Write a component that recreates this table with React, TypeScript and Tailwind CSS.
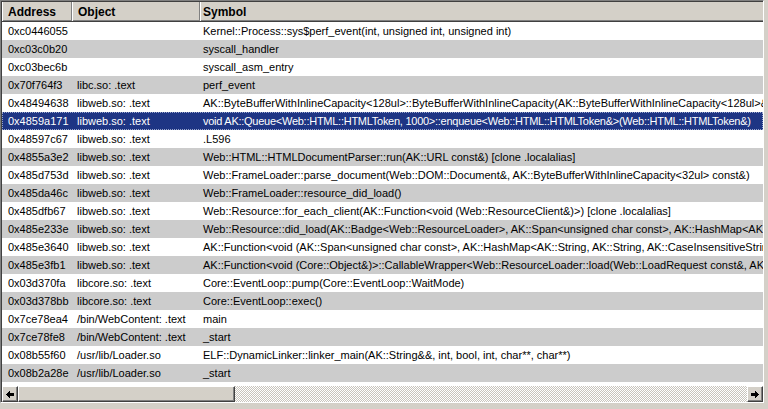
import React from "react";

const rows: [string, string, string][] = [
  ["0xc0446055", "", "Kernel::Process::sys$perf_event(int, unsigned int, unsigned int)"],
  ["0xc03c0b20", "", "syscall_handler"],
  ["0xc03bec6b", "", "syscall_asm_entry"],
  ["0x70f764f3", "libc.so: .text", "perf_event"],
  ["0x48494638", "libweb.so: .text", "AK::ByteBufferWithInlineCapacity<128ul>::ByteBufferWithInlineCapacity(AK::ByteBufferWithInlineCapacity<128ul>&&)"],
  ["0x4859a171", "libweb.so: .text", "void AK::Queue<Web::HTML::HTMLToken, 1000>::enqueue<Web::HTML::HTMLToken&>(Web::HTML::HTMLToken&)"],
  ["0x48597c67", "libweb.so: .text", ".L596"],
  ["0x4855a3e2", "libweb.so: .text", "Web::HTML::HTMLDocumentParser::run(AK::URL const&) [clone .localalias]"],
  ["0x485d753d", "libweb.so: .text", "Web::FrameLoader::parse_document(Web::DOM::Document&, AK::ByteBufferWithInlineCapacity<32ul> const&)"],
  ["0x485da46c", "libweb.so: .text", "Web::FrameLoader::resource_did_load()"],
  ["0x485dfb67", "libweb.so: .text", "Web::Resource::for_each_client(AK::Function<void (Web::ResourceClient&)>) [clone .localalias]"],
  ["0x485e233e", "libweb.so: .text", "Web::Resource::did_load(AK::Badge<Web::ResourceLoader>, AK::Span<unsigned char const>, AK::HashMap<AK::String, AK::String, AK::CaseInsensitiveStringTraits> const&)"],
  ["0x485e3640", "libweb.so: .text", "AK::Function<void (AK::Span<unsigned char const>, AK::HashMap<AK::String, AK::String, AK::CaseInsensitiveStringTraits> const&)>"],
  ["0x485e3fb1", "libweb.so: .text", "AK::Function<void (Core::Object&)>::CallableWrapper<Web::ResourceLoader::load(Web::LoadRequest const&, AK::Function<void ()>)>"],
  ["0x03d370fa", "libcore.so: .text", "Core::EventLoop::pump(Core::EventLoop::WaitMode)"],
  ["0x03d378bb", "libcore.so: .text", "Core::EventLoop::exec()"],
  ["0x7ce78ea4", "/bin/WebContent: .text", "main"],
  ["0x7ce78fe8", "/bin/WebContent: .text", "_start"],
  ["0x08b55f60", "/usr/lib/Loader.so", "ELF::DynamicLinker::linker_main(AK::String&&, int, bool, int, char**, char**)"],
  ["0x08b2a28e", "/usr/lib/Loader.so", "_start"],
];

const bevel =
  "bg-[#d4d0c8] border border-t-white border-l-white border-r-[#404040] border-b-[#404040] shadow-[inset_-1px_-1px_0_#808080]";

function Arrow({ dir }: { dir: "left" | "right" }) {
  return (
    <svg width="8" height="7" viewBox="0 0 8 7" shapeRendering="crispEdges">
      {dir === "left" ? (
        <path d="M0 3.5 L4 0 V2 H8 V5 H4 V7 Z" fill="#000" />
      ) : (
        <path d="M8 3.5 L4 0 V2 H0 V5 H4 V7 Z" fill="#000" />
      )}
    </svg>
  );
}

export default function App() {
  return (
    <div className="w-[768px] h-[409px] bg-[#d4d0c8] font-['Liberation_Sans',Arial,sans-serif] text-[11px] text-black overflow-hidden">
      <div className="w-[764px] h-[403px] border border-t-[#808080] border-l-[#808080] border-r-white border-b-white shadow-[inset_1px_1px_0_#404040] pt-[1px] pl-[1px] flex flex-col">
        {/* header */}
        <div className="h-[20px] flex shrink-0 border-b border-[#404040] font-bold text-[12px]">
          <div className="w-[70px] shrink-0 border-l border-white border-r border-r-[#808080] shadow-[inset_0_-1px_0_#808080] pl-[5px] leading-[21px]">
            Address
          </div>
          <div className="w-[128px] shrink-0 border-l border-white border-r border-r-[#808080] shadow-[inset_0_-1px_0_#808080] pl-[5px] leading-[21px]">
            Object
          </div>
          <div className="flex-1 border-l border-white shadow-[inset_0_-1px_0_#808080] pl-[2px] leading-[21px]">
            Symbol
          </div>
        </div>
        {/* rows */}
        <div className="flex-1 bg-white overflow-hidden">
          {rows.map((r, i) => {
            const selected = i === 5;
            const bg = selected
              ? "bg-[#1e3584] text-white outline outline-1 outline-dotted outline-[#9aa6cc] -outline-offset-1"
              : i % 2 === 1
              ? "bg-[#cccccc]"
              : "bg-white";
            return (
              <div key={i} className={`h-[18px] leading-[18px] flex whitespace-nowrap overflow-hidden ${bg}`}>
                <div className="w-[70px] shrink-0 pl-[6px]">{r[0]}</div>
                <div className="w-[128px] shrink-0 pl-[5px] overflow-hidden">{r[1]}</div>
                <div className={`flex-1 pl-[3px] ${selected ? "tracking-[-0.26px]" : ""}`}>{r[2]}</div>
              </div>
            );
          })}
        </div>
        {/* scrollbar */}
        <div className="h-[16px] flex shrink-0">
          <div className={`w-[16px] shrink-0 flex items-center justify-center ${bevel}`}>
            <Arrow dir="left" />
          </div>
          <div className={`w-[217px] shrink-0 ${bevel}`} />
          <div className="flex-1 bg-[image:repeating-conic-gradient(#ffffff_0%_25%,#c8c4bc_0%_50%)] bg-[length:2px_2px]" />
          <div className={`w-[16px] shrink-0 flex items-center justify-center ${bevel}`}>
            <Arrow dir="right" />
          </div>
        </div>
      </div>
    </div>
  );
}
